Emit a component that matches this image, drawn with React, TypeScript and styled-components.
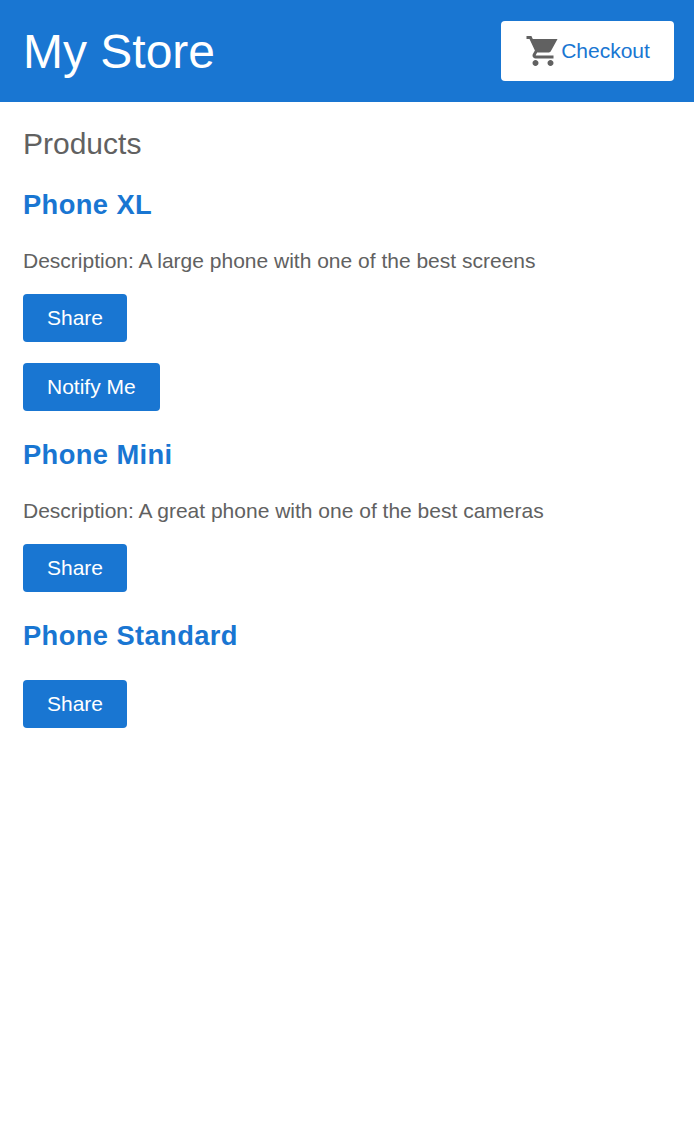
import React from "react";
import styled, { createGlobalStyle } from "styled-components";

const GlobalStyle = createGlobalStyle`
  * { box-sizing: border-box; }
  body {
    margin: 0;
    background: #fff;
    font-family: "Liberation Sans", Arial, sans-serif;
    color: #616161;
  }
`;

type Product = { name: string; description?: string; notify?: boolean };

const products: Product[] = [
  { name: "Phone XL", description: "A large phone with one of the best screens", notify: true },
  { name: "Phone Mini", description: "A great phone with one of the best cameras" },
  { name: "Phone Standard" },
];

export default function App() {
  return (
    <>
      <GlobalStyle />
      <TopBar>
        <StoreName>My Store</StoreName>
        <CheckoutButton>
          <CartIcon viewBox="0 0 24 24">
            <path d="M7 18c-1.1 0-1.99.9-1.99 2S5.9 22 7 22s2-.9 2-2-.9-2-2-2zM1 2v2h2l3.6 7.59-1.35 2.45c-.16.28-.25.61-.25.96 0 1.1.9 2 2 2h12v-2H7.42c-.14 0-.25-.11-.25-.25l.03-.12.9-1.63h7.45c.75 0 1.41-.41 1.75-1.03L21.7 4H5.21l-.94-2H1zm16 16c-1.1 0-1.99.9-1.99 2s.89 2 1.99 2 2-.9 2-2-.9-2-2-2z" />
          </CartIcon>
          Checkout
        </CheckoutButton>
      </TopBar>
      <Content>
        <PageTitle>Products</PageTitle>
        {products.map((product) => (
          <ProductItem key={product.name}>
            <ProductName>{product.name}</ProductName>
            {product.description && <Description>Description: {product.description}</Description>}
            <ActionButton>Share</ActionButton>
            {product.notify && <ActionButton>Notify Me</ActionButton>}
          </ProductItem>
        ))}
      </Content>
    </>
  );
}

const TopBar = styled.header`
  display: flex;
  align-items: center;
  justify-content: space-between;
  height: 102px;
  padding: 0 20px 0 23px;
  background-color: #1976d2;
`;

const StoreName = styled.h1`
  margin: 0;
  color: #fff;
  font-size: 48px;
  font-weight: 400;
`;

const CheckoutButton = styled.a`
  display: flex;
  align-items: center;
  justify-content: center;
  width: 173px;
  height: 60px;
  border-radius: 4px;
  background-color: #fff;
  color: #1976d2;
  font-size: 21px;
`;

const CartIcon = styled.svg`
  width: 36px;
  height: 36px;
  fill: #616161;
`;

const Content = styled.main`
  padding: 23px 23px 0;
`;

const PageTitle = styled.h2`
  margin: 0 0 27px;
  color: #616161;
  font-size: 30px;
  line-height: 37px;
  font-weight: 400;
`;

const ProductItem = styled.div`
  padding-bottom: 7px;
`;

const ProductName = styled.h3`
  margin: 0 0 28px;
  color: #1976d2;
  font-size: 27.3px;
  line-height: 32px;
  font-weight: 700;
  letter-spacing: 0.4px;
`;

const Description = styled.p`
  margin: 0 0 21px;
  font-size: 21px;
  line-height: 24px;
`;

const ActionButton = styled.button`
  display: block;
  height: 48px;
  margin-bottom: 21px;
  padding: 0 24px;
  border: none;
  border-radius: 4px;
  background-color: #1976d2;
  color: #fff;
  font-family: inherit;
  font-size: 21px;
`;
